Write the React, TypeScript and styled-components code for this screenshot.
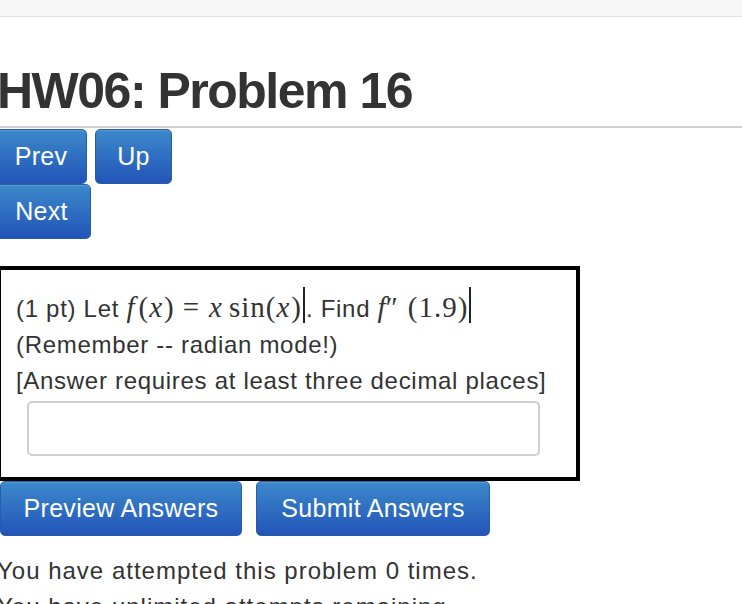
import React from 'react'
import styled, { createGlobalStyle } from 'styled-components'

const GlobalStyle = createGlobalStyle`
	body {
		margin: 0;
		background: #fff;
		color: #333;
		font-family: 'Liberation Sans', Arial, sans-serif;
		overflow: hidden;
	}
`

const TopBar = styled.div`
	height: 16px;
	background: #f6f6f6;
	border-bottom: 1px solid #e3e3e3;
`

const Main = styled.div`
	margin-left: -3px;
`

const Title = styled.h1`
	margin: 0 -10px 0 0;
	padding: 44px 0 5px;
	font-size: 50px;
	line-height: 60px;
	font-weight: bold;
	letter-spacing: -1.5px;
	border-bottom: 2px solid #d0d0d0;
`

const NavRow = styled.div`
	display: flex;
	gap: 8px;
	padding-top: 1px;
`

const BlueButton = styled.button<{ $width: number; $pull?: number }>`
	display: block;
	width: ${(p) => p.$width}px;
	margin-left: ${(p) => p.$pull ?? 0}px;
	height: 55px;
	border: 1px solid #2a5ca6;
	border-radius: 5px;
	background: linear-gradient(#3c89cb, #2254b8);
	color: #fff;
	font-family: 'Liberation Sans', Arial, sans-serif;
	font-size: 25px;
	letter-spacing: 0.3px;
	padding: 0;
	box-shadow: inset 0 1px 0 rgba(255, 255, 255, 0.15);
	cursor: pointer;
`

const ProblemBox = styled.div`
	margin-top: 27px;
	width: 583px;
	border: 4px solid #000;
	box-sizing: border-box;
	padding: 21px 0 21px 15px;
	font-size: 24px;
	line-height: 36px;
	letter-spacing: 0.7px;
`

const Line = styled.div`
	white-space: nowrap;
`

const Mi = styled.span<{ $after?: number }>`
	font-family: 'Liberation Serif', 'Times New Roman', serif;
	font-style: italic;
	font-size: 29px;
	line-height: 1;
	letter-spacing: 0;
	margin-right: ${(p) => p.$after ?? 2}px;
`

const Mo = styled.span<{ $before?: number; $after?: number }>`
	font-family: 'Liberation Serif', 'Times New Roman', serif;
	font-size: 29px;
	line-height: 1;
	letter-spacing: 1px;
	margin-left: ${(p) => p.$before ?? 0}px;
	margin-right: ${(p) => p.$after ?? 0}px;
`

const Caret = styled.span`
	display: inline-block;
	width: 2px;
	height: 36px;
	margin: -8px 1px 0;
	background: #222;
	vertical-align: -6px;
`

const AnswerInput = styled.input`
	display: block;
	margin: 2px 0 0 11px;
	width: 513px;
	height: 55px;
	box-sizing: border-box;
	border: 2px solid #cfcfcf;
	border-radius: 5px;
	font-size: 22px;
	padding: 0 10px;
	outline: none;
`

const ActionRow = styled.div`
	display: flex;
	gap: 14px;
	padding-left: 3px;
`

const Info = styled.p`
	margin: 17px 0 0;
	font-size: 24px;
	line-height: 36px;
	letter-spacing: 1px;
`

export default function App() {
	return (
		<>
			<GlobalStyle />
			<TopBar />
			<Main>
				<Title>HW06: Problem 16</Title>
				<NavRow>
					<BlueButton $width={92} $pull={-2}>Prev</BlueButton>
					<BlueButton $width={77}>Up</BlueButton>
				</NavRow>
				<BlueButton $width={99} $pull={-5}>Next</BlueButton>
				<ProblemBox>
					<Line>
						(1 pt) Let <Mi $after={4}>f</Mi>
						<Mo>(</Mo>
						<Mi>x</Mi>
						<Mo>)</Mo>
						<Mo $before={8} $after={9}>=</Mo>
						<Mi $after={7}>x</Mi>
						<Mo>sin(</Mo>
						<Mi>x</Mi>
						<Mo>)</Mo>
						<Caret />. Find <Mi $after={0}>f</Mi>
						<Mo $after={9}>″</Mo>
						<Mo>(1.9)</Mo>
						<Caret />
					</Line>
					<Line>(Remember -- radian mode!)</Line>
					<Line>[Answer requires at least three decimal places]</Line>
					<AnswerInput type="text" />
				</ProblemBox>
				<ActionRow>
					<BlueButton $width={242}>Preview Answers</BlueButton>
					<BlueButton $width={234}>Submit Answers</BlueButton>
				</ActionRow>
				<Info>
					You have attempted this problem 0 times.
					<br />
					You have unlimited attempts remaining.
				</Info>
			</Main>
		</>
	)
}
